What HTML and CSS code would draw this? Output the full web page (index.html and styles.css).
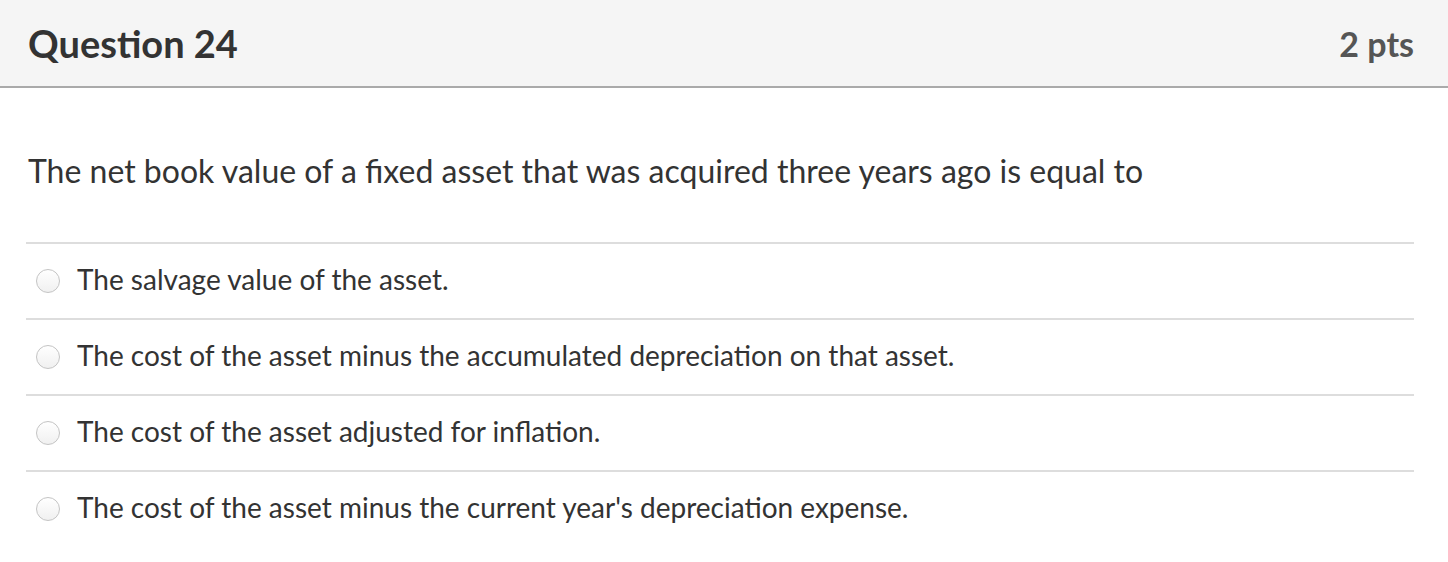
FILE: index.html
```html
<!DOCTYPE html>
<html>
<head>
<meta charset="utf-8">
<link rel="stylesheet" href="styles.css">
</head>
<body>
<div class="question">
  <div class="header">
    <h2 class="title">Question 24</h2>
    <div class="pts">2 pts</div>
  </div>
  <div class="body">
    <p class="text">The net book value of a fixed asset that was acquired three years ago is equal to</p>
    <div class="answers">
      <div class="answer"><span class="radio"></span><span class="label">The salvage value of the asset.</span></div>
      <div class="answer"><span class="radio"></span><span class="label">The cost of the asset minus the accumulated depreciation on that asset.</span></div>
      <div class="answer"><span class="radio"></span><span class="label">The cost of the asset adjusted for inflation.</span></div>
      <div class="answer"><span class="radio"></span><span class="label">The cost of the asset minus the current year's depreciation expense.</span></div>
    </div>
  </div>
</div>
</body>
</html>
```
FILE: styles.css
```css
html, body {
  margin: 0;
  padding: 0;
  background: #fff;
}
body {
  font-family: Lato, "Open Sans", sans-serif;
  color: #333333;
}
.question {
  width: 1448px;
}
.header {
  background: #f5f5f5;
  height: 86px;
  border-bottom: 2px solid #aaaaaa;
  display: flex;
  align-items: center;
  justify-content: space-between;
  padding: 0 34px 0 28px;
}
.title {
  margin: 0;
  font-size: 38px;
  line-height: 44px;
  font-weight: 700;
  color: #333333;
}
.pts {
  font-size: 34px;
  font-weight: 700;
  color: #555555;
}
.body {
  padding: 0 34px 0 26px;
}
.text {
  margin: 0;
  padding: 64px 0 52px 2px;
  font-size: 32px;
  line-height: 38px;
  color: #333333;
}
.answer {
  border-top: 2px solid #dddddd;
  height: 74px;
  display: flex;
  align-items: center;
}
.radio {
  width: 22px;
  height: 22px;
  border: 1px solid #c4c4c4;
  border-radius: 50%;
  background: linear-gradient(#ffffff, #f0f0f0);
  margin-left: 10px;
  margin-right: 17px;
  margin-bottom: 1px;
  flex: none;
}
.label {
  font-size: 28px;
  line-height: 34px;
  padding-bottom: 5px;
  color: #333333;
}
```
